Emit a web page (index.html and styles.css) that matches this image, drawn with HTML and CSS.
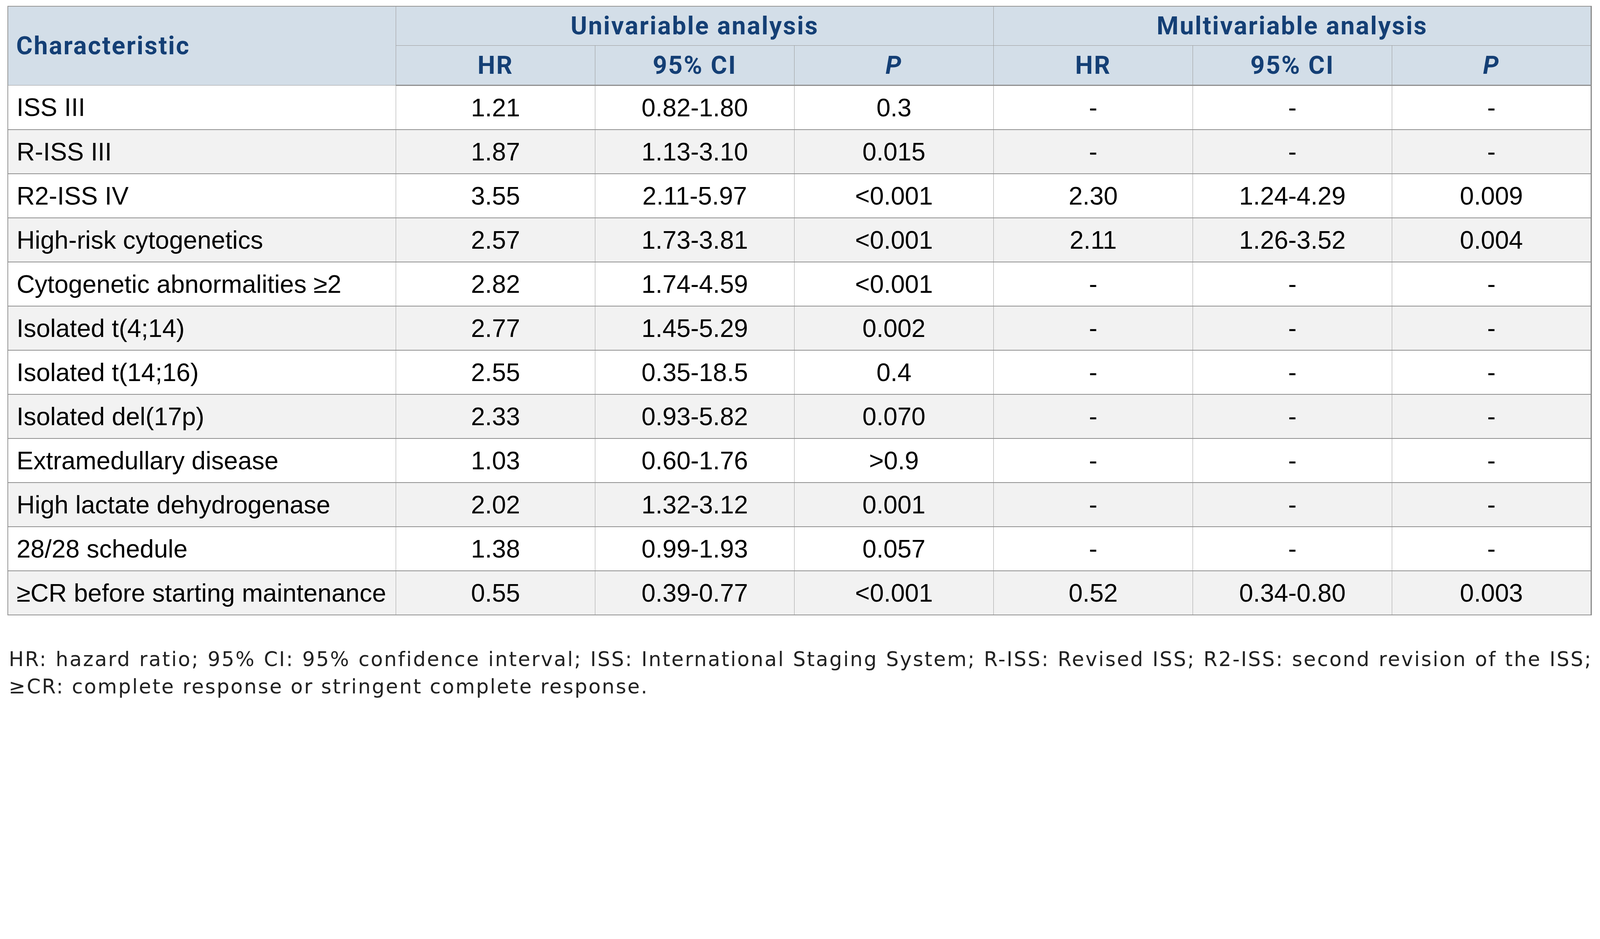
FILE: index.html
```html
<!DOCTYPE html>
<html lang="en">
<head>
<meta charset="utf-8">
<title>Cox regression analysis</title>
<link rel="stylesheet" href="styles.css">
</head>
<body>
<div class="page">
  <table class="data">
    <colgroup>
      <col class="c-first">
      <col class="c-num"><col class="c-num"><col class="c-num">
      <col class="c-num"><col class="c-num"><col class="c-num">
    </colgroup>
    <thead>
      <tr class="h1">
        <th rowspan="2" class="left">Characteristic</th>
        <th colspan="3">Univariable analysis</th>
        <th colspan="3">Multivariable analysis</th>
      </tr>
      <tr class="h2">
        <th>HR</th><th>95% CI</th><th><i>P</i></th>
        <th>HR</th><th>95% CI</th><th><i>P</i></th>
      </tr>
    </thead>
    <tbody>
      <tr><td class="left">ISS III</td><td>1.21</td><td>0.82-1.80</td><td>0.3</td><td>-</td><td>-</td><td>-</td></tr>
      <tr><td class="left">R-ISS III</td><td>1.87</td><td>1.13-3.10</td><td>0.015</td><td>-</td><td>-</td><td>-</td></tr>
      <tr><td class="left">R2-ISS IV</td><td>3.55</td><td>2.11-5.97</td><td>&lt;0.001</td><td>2.30</td><td>1.24-4.29</td><td>0.009</td></tr>
      <tr><td class="left">High-risk cytogenetics</td><td>2.57</td><td>1.73-3.81</td><td>&lt;0.001</td><td>2.11</td><td>1.26-3.52</td><td>0.004</td></tr>
      <tr><td class="left">Cytogenetic abnormalities ≥2</td><td>2.82</td><td>1.74-4.59</td><td>&lt;0.001</td><td>-</td><td>-</td><td>-</td></tr>
      <tr><td class="left">Isolated t(4;14)</td><td>2.77</td><td>1.45-5.29</td><td>0.002</td><td>-</td><td>-</td><td>-</td></tr>
      <tr><td class="left">Isolated t(14;16)</td><td>2.55</td><td>0.35-18.5</td><td>0.4</td><td>-</td><td>-</td><td>-</td></tr>
      <tr><td class="left">Isolated del(17p)</td><td>2.33</td><td>0.93-5.82</td><td>0.070</td><td>-</td><td>-</td><td>-</td></tr>
      <tr><td class="left">Extramedullary disease</td><td>1.03</td><td>0.60-1.76</td><td>&gt;0.9</td><td>-</td><td>-</td><td>-</td></tr>
      <tr><td class="left">High lactate dehydrogenase</td><td>2.02</td><td>1.32-3.12</td><td>0.001</td><td>-</td><td>-</td><td>-</td></tr>
      <tr><td class="left">28/28 schedule</td><td>1.38</td><td>0.99-1.93</td><td>0.057</td><td>-</td><td>-</td><td>-</td></tr>
      <tr><td class="left">≥CR before starting maintenance</td><td>0.55</td><td>0.39-0.77</td><td>&lt;0.001</td><td>0.52</td><td>0.34-0.80</td><td>0.003</td></tr>
    </tbody>
  </table>
  <p class="note"><span class="note-line">HR: hazard ratio; 95% CI: 95% confidence interval; ISS: International Staging System; R-ISS: Revised ISS; R2-ISS: second revision of the ISS;</span> <span class="note-last">≥CR: complete response or stringent complete response.</span></p>
</div>
</body>
</html>
```
FILE: styles.css
```css
html, body {
  margin: 0;
  padding: 0;
  background: #ffffff;
}

.page {
  padding: 15px 0 0 18.5px;
  width: 4056px;
}

.data {
  width: 4056px;
  border-collapse: collapse;
  table-layout: fixed;
  font-family: "Liberation Sans", Arial, sans-serif;
  font-size: 64.5px;
  color: #000000;
  border: 2px solid #959595;
  border-right-width: 3px;
  border-right-color: #8a8a8a;
}

.c-first { width: 994px; }
.c-num { width: 510px; }

.data th {
  background: #d3dee8;
  color: #143f75;
  font-family: Roboto, "Liberation Sans", Arial, sans-serif;
  font-weight: 700;
  font-size: 64px;
  letter-spacing: 3px;
  text-align: center;
  vertical-align: middle;
  border: 1.5px solid #9a9a9a;
  padding: 0 8px;
}

.data th i {
  font-style: italic;
}

.data .h1 th { height: 99px; }
.data .h2 th { height: 100px; border-bottom: 3px solid #8f8f8f; }

.data th.left {
  text-align: left;
  padding-left: 21px;
}

.data td {
  height: 111px;
  text-align: center;
  vertical-align: middle;
  border-left: 1.5px solid #a0a0a0;
  border-right: 1.5px solid #a0a0a0;
  border-bottom: 2.2px solid #8f8f8f;
  padding: 0 8px;
  white-space: nowrap;
}

.data td.left {
  text-align: left;
  padding-left: 22px;
}

.data tbody tr:nth-child(even) td {
  background: #f2f2f2;
}

.note {
  margin: 78px 0 0 4px;
  width: 4054px;
  font-family: "DejaVu Sans", Verdana, sans-serif;
  font-size: 51px;
  letter-spacing: 3.2px;
  line-height: 70px;
  color: #222222;
}

.note-line {
  display: block;
  text-align: justify;
  text-align-last: justify;
}

.note-last {
  display: block;
}
```
